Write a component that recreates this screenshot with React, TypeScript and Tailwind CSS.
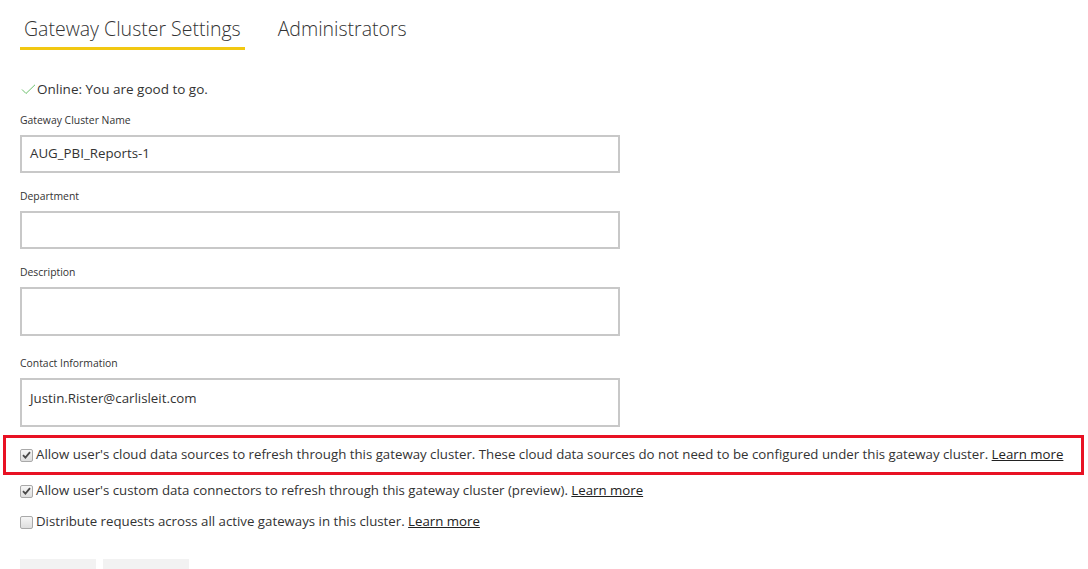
import React from 'react';

const font = { fontFamily: '"Open Sans", "Noto Sans", sans-serif' };

function Box({ checked }: { checked: boolean }) {
  return (
    <span className="relative inline-flex w-[13px] h-[13px] shrink-0 rounded-[2px] border border-[#a9a9a9] bg-gradient-to-b from-[#f6f6f6] to-[#dedede] items-center justify-center">
      {checked && (
        <svg width="9" height="8" viewBox="0 0 9 8" className="block">
          <path d="M1 4.2 L3.4 6.6 L8 1.2" fill="none" stroke="#4a4a4a" strokeWidth="1.8" />
        </svg>
      )}
    </span>
  );
}

function Option({ checked, text }: { checked: boolean; text: string }) {
  return (
    <div className="flex items-center h-5 text-[13.25px] text-[#333]">
      <Box checked={checked} />
      <span className="ml-[3px] whitespace-nowrap">
        {text} <span className="underline text-[#222]">Learn more</span>
      </span>
    </div>
  );
}

function Field({ label, value, tall, top }: { label: string; value?: string; tall?: boolean; top: string }) {
  return (
    <div className={top}>
      <div className="h-[15px] leading-[15px] text-[10.4px] text-[#333]">{label}</div>
      <div
        className={`mt-[7px] w-[600px] border-2 border-[#c8c8c8] px-[8px] text-[13.3px] text-[#333] ${
          tall ? 'h-[49px] pt-[9px]' : 'h-[38px] flex items-center'
        }`}
      >
        {value}
      </div>
    </div>
  );
}

export default function App() {
  return (
    <main className="w-[1088px] h-[569px] overflow-hidden bg-white pl-5" style={font}>
      <nav className="flex items-end pt-[15px]">
        <div className="px-1 pb-1 border-b-[3px] border-[#f2c811] text-[19.5px] leading-[28px] font-light text-[#333]">
          Gateway Cluster Settings
        </div>
        <div className="ml-[29px] px-1 pb-[7px] text-[19.5px] leading-[28px] font-light text-[#333]">
          Administrators
        </div>
      </nav>

      <div className="mt-[29px] flex items-center h-5 text-[13.5px] text-[#333]">
        <svg width="15" height="11" viewBox="0 0 15 11" className="ml-[1px] mr-[1px]">
          <path d="M1 5.5 L5 9.5 L14 0.8" fill="none" stroke="#6cc06c" strokeWidth="1" />
        </svg>
        <span>Online: You are good to go.</span>
      </div>

      <Field top="mt-[14px]" label="Gateway Cluster Name" value="AUG_PBI_Reports-1" />
      <Field top="mt-[16px]" label="Department" />
      <Field top="mt-[16px]" label="Description" tall />
      <Field top="mt-[20px]" label="Contact Information" value="Justin.Rister@carlisleit.com" tall />

      <div className="-ml-[17px] mt-[8px] w-[1081px] h-[40px] border-[3px] border-[#e81123] pl-[14px] flex items-center">
        <Option
          checked
          text="Allow user's cloud data sources to refresh through this gateway cluster. These cloud data sources do not need to be configured under this gateway cluster."
        />
      </div>
      <div className="mt-[6px]">
        <Option checked text="Allow user's custom data connectors to refresh through this gateway cluster (preview)." />
      </div>
      <div className="mt-[11px]">
        <Option checked={false} text="Distribute requests across all active gateways in this cluster." />
      </div>

      <div className="mt-[27px] flex gap-[7px]">
        <button type="button" className="w-[76px] h-8 bg-[#f2f2f2]" />
        <button type="button" className="w-[86px] h-8 bg-[#f2f2f2]" />
      </div>
    </main>
  );
}
